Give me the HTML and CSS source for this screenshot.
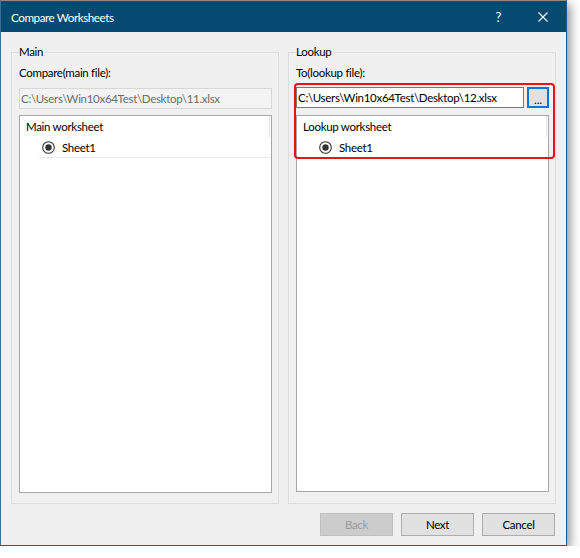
FILE: index.html
```html
<!DOCTYPE html>
<html>
<head>
<meta charset="utf-8">
<link rel="stylesheet" href="styles.css">
</head>
<body>
<div class="window">
  <div class="titlebar">
    <span class="title">Compare Worksheets</span>
    <span class="help">?</span>
    <svg class="close" width="10" height="10" viewBox="0 0 10 10"><path d="M0.5 0.5 L9.5 9.5 M9.5 0.5 L0.5 9.5" stroke="#ffffff" stroke-width="1.1" fill="none"/></svg>
  </div>
  <div class="content">
    <div class="groups">
      <fieldset class="group">
        <legend>Main</legend>
        <div class="label">Compare(main file):</div>
        <div class="file-area">
          <div class="path-row">
            <div class="textbox disabled">C:\Users\Win10x64Test\Desktop\11.xlsx</div>
          </div>
          <div class="list">
            <div class="list-head">Main worksheet</div>
            <div class="list-row">
              <svg class="radio" width="13" height="13" viewBox="0 0 13 13"><circle cx="6.5" cy="6.5" r="5.8" fill="#fff" stroke="#333" stroke-width="1.1"/><circle cx="6.5" cy="6.5" r="3.2" fill="#333"/></svg>
              <span>Sheet1</span>
            </div>
          </div>
        </div>
      </fieldset>
      <fieldset class="group">
        <legend>Lookup</legend>
        <div class="label">To(lookup file):</div>
        <div class="file-area lookup">
          <div class="path-row">
            <div class="textbox">C:\Users\Win10x64Test\Desktop\12.xlsx</div>
            <div class="browse">...</div>
          </div>
          <div class="list">
            <div class="list-head">Lookup worksheet</div>
            <div class="list-row plain">
              <svg class="radio" width="13" height="13" viewBox="0 0 13 13"><circle cx="6.5" cy="6.5" r="5.8" fill="#fff" stroke="#333" stroke-width="1.1"/><circle cx="6.5" cy="6.5" r="3.2" fill="#333"/></svg>
              <span>Sheet1</span>
            </div>
          </div>
          <div class="highlight"></div>
        </div>
      </fieldset>
    </div>
    <div class="buttons">
      <div class="btn disabled">Back</div>
      <div class="btn">Next</div>
      <div class="btn">Cancel</div>
    </div>
  </div>
</div>
</body>
</html>
```

FILE: styles.css
```css
html, body {
  margin: 0;
  padding: 0;
  background: #ffffff;
}
body {
  font-family: "Lato", "Liberation Sans", sans-serif;
  font-size: 11.5px;
  letter-spacing: -0.3px;
  color: #000000;
}
.window {
  width: 565px;
  border: 1px solid #1f5b86;
  border-top-color: #8a8a8a;
  border-left-color: #3a6f96;
  background: #f0f0f0;
  box-shadow: 3px 4px 10px rgba(0, 0, 0, 0.45);
}
.titlebar {
  height: 31px;
  background: #064a71;
  color: #ffffff;
  display: flex;
  align-items: center;
}
.title {
  padding-left: 10px;
  font-size: 11.7px;
  letter-spacing: -0.45px;
  flex: 1;
}
.help {
  font-size: 13px;
  margin-right: 37px;
}
.close {
  margin-right: 18px;
  display: block;
}
.content {
  padding: 13px 0 9px 10px;
}
.groups {
  display: flex;
  gap: 9px;
}
.group {
  width: 253px;
  margin: 0;
  padding: 7px 6px 10px 7px;
  border: 1px solid #dcdcdc;
  min-width: 0;
}
.group legend {
  padding: 0 2px 0 0;
  line-height: 14px;
}
.label {
  line-height: 14px;
}
.file-area {
  margin-top: 8px;
  position: relative;
}
.file-area.lookup {
  margin-top: 7px;
}
.path-row {
  display: flex;
  gap: 3px;
  height: 21px;
}
.textbox {
  flex: 1;
  box-sizing: border-box;
  height: 21px;
  border: 1px solid #7a7a7a;
  background: #ffffff;
  padding-left: 1px;
  line-height: 19px;
  white-space: nowrap;
  overflow: hidden;
}
.textbox.disabled {
  border-color: #d7d7d7;
  background: #f3f3f3;
  color: #6d6d6d;
}
.browse {
  box-sizing: border-box;
  width: 22px;
  height: 21px;
  border: 2px solid #0078d7;
  background: #e1e1e1;
  text-align: center;
  line-height: 21px;
  letter-spacing: 0;
}
.list {
  margin-top: 6px;
  box-sizing: border-box;
  height: 378px;
  border: 1px solid #a8a8a8;
  background: #ffffff;
}
.lookup .list {
  margin-top: 7px;
  height: 377px;
}
.list-head {
  height: 21px;
  line-height: 21px;
  padding-left: 6px;
  margin-right: 1px;
  border-right: 1px solid #e4e4e4;
}
.list-row {
  height: 20px;
  margin-left: 19px;
  margin-right: 1px;
  border-bottom: 1px solid #e8e8e8;
  display: flex;
  align-items: center;
  gap: 7px;
  padding-left: 3px;
}
.list-row.plain {
  border-bottom-color: transparent;
}
.radio {
  display: block;
}
.highlight {
  position: absolute;
  left: -2px;
  top: -4px;
  width: 257px;
  height: 72px;
  border: 2px solid #e8121a;
  border-radius: 4px;
}
.buttons {
  display: flex;
  justify-content: flex-end;
  gap: 8px;
  margin-top: 9px;
  padding-right: 11px;
}
.btn {
  box-sizing: border-box;
  width: 73px;
  height: 23px;
  border: 1px solid #adadad;
  background: #e1e1e1;
  text-align: center;
  line-height: 21px;
}
.btn.disabled {
  background: #cccccc;
  border-color: #bfbfbf;
  color: #9c9c9c;
}
```
